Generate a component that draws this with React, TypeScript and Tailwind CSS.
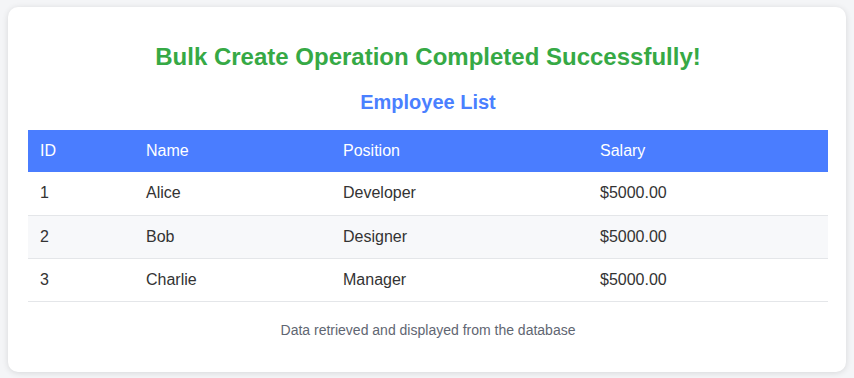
const employees = [
  { id: 1, name: "Alice", position: "Developer", salary: 5000 },
  { id: 2, name: "Bob", position: "Designer", salary: 5000 },
  { id: 3, name: "Charlie", position: "Manager", salary: 5000 },
];

const App = () => {
  return (
    <div
      className="min-h-screen bg-[#f4f5f7] px-2 pt-[7px] pb-2"
      style={{ fontFamily: '"Liberation Sans", Arial, sans-serif' }}
    >
      <div className="bg-white rounded-[10px] shadow-[0_1px_6px_rgba(0,0,0,0.12)] pl-5 pr-[18px] pt-[36px] pb-[34px]">
        <h1 className="text-center text-[24px] leading-[28px] font-bold text-[#36a945]">
          Bulk Create Operation Completed Successfully!
        </h1>
        <h2 className="mt-[19px] text-center text-[20px] leading-[24px] font-bold text-[#4a80ff]">
          Employee List
        </h2>

        <table className="mt-[16px] w-full border-collapse text-[16px] text-[#333]">
          <thead>
            <tr className="bg-[#4a7dff] text-white">
              <th className="w-[106px] h-[42px] px-3 text-left font-normal">ID</th>
              <th className="w-[197px] px-3 text-left font-normal">Name</th>
              <th className="w-[257px] px-3 text-left font-normal">Position</th>
              <th className="px-3 text-left font-normal">Salary</th>
            </tr>
          </thead>
          <tbody>
            {employees.map((emp, i) => (
              <tr
                key={emp.id}
                className={`border-b border-[#e4e6e9] ${i % 2 === 1 ? "bg-[#f7f8fa]" : "bg-white"}`}
              >
                <td className="h-[43px] px-3">{emp.id}</td>
                <td className="px-3">{emp.name}</td>
                <td className="px-3">{emp.position}</td>
                <td className="px-3">${emp.salary.toFixed(2)}</td>
              </tr>
            ))}
          </tbody>
        </table>

        <p className="mt-[20px] text-center text-[14px] leading-[16px] text-[#5f6672]">
          Data retrieved and displayed from the database
        </p>
      </div>
    </div>
  );
};

export default App;
